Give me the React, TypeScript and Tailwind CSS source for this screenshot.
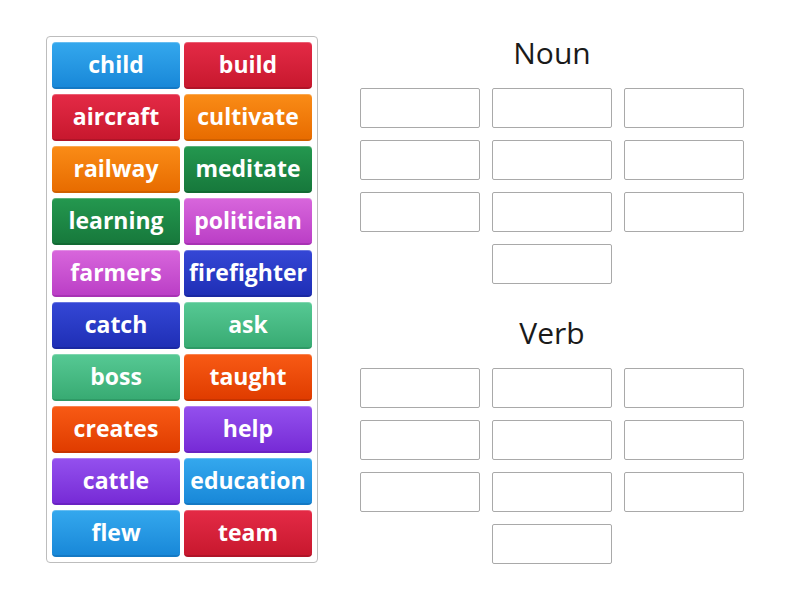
const tiles: { word: string; cls: string }[] = [
  { word: "child", cls: "from-[#34a8ee] to-[#1888d8] border-[#1479c4]" },
  { word: "build", cls: "from-[#e42a46] to-[#c8182e] border-[#b01428]" },
  { word: "aircraft", cls: "from-[#e42a46] to-[#c8182e] border-[#b01428]" },
  { word: "cultivate", cls: "from-[#fa8c16] to-[#e86c00] border-[#d06000]" },
  { word: "railway", cls: "from-[#fa8c16] to-[#e86c00] border-[#d06000]" },
  { word: "meditate", cls: "from-[#24984f] to-[#17793c] border-[#126a33]" },
  { word: "learning", cls: "from-[#24984f] to-[#17793c] border-[#126a33]" },
  { word: "politician", cls: "from-[#d866dc] to-[#bb3ec6] border-[#a832b4]" },
  { word: "farmers", cls: "from-[#d866dc] to-[#bb3ec6] border-[#a832b4]" },
  { word: "firefighter", cls: "from-[#3547d6] to-[#1f2fb6] border-[#1a28a2]" },
  { word: "catch", cls: "from-[#3547d6] to-[#1f2fb6] border-[#1a28a2]" },
  { word: "ask", cls: "from-[#56c994] to-[#38ab73] border-[#2f9a66]" },
  { word: "boss", cls: "from-[#56c994] to-[#38ab73] border-[#2f9a66]" },
  { word: "taught", cls: "from-[#f85a14] to-[#e03c00] border-[#c83400]" },
  { word: "creates", cls: "from-[#f85a14] to-[#e03c00] border-[#c83400]" },
  { word: "help", cls: "from-[#9450ee] to-[#772ad6] border-[#6a22c2]" },
  { word: "cattle", cls: "from-[#9450ee] to-[#772ad6] border-[#6a22c2]" },
  { word: "education", cls: "from-[#34a8ee] to-[#1888d8] border-[#1479c4]" },
  { word: "flew", cls: "from-[#34a8ee] to-[#1888d8] border-[#1479c4]" },
  { word: "team", cls: "from-[#e42a46] to-[#c8182e] border-[#b01428]" },
];

function DropGrid() {
  return (
    <div className="grid grid-cols-[120px_120px_120px] gap-[12px]">
      {Array.from({ length: 9 }).map((_, i) => (
        <div key={i} className="h-[40px] border border-[#a9a9a9] rounded-[2px] bg-white" />
      ))}
      <div className="col-start-2 h-[40px] border border-[#a9a9a9] rounded-[2px] bg-white" />
    </div>
  );
}

export default function App() {
  return (
    <div
      className="w-[800px] h-[600px] bg-white flex items-start pl-[46px]"
      style={{ fontFamily: '"Open Sans", sans-serif' }}
    >
      <div className="mt-[36px] w-[272px] h-[527px] border border-[#bdbdbd] rounded-[4px] p-[5px] grid grid-cols-[128px_128px] gap-x-[4px] gap-y-[5px] auto-rows-[47px]">
        {tiles.map((t) => (
          <div
            key={t.word}
            className={`bg-gradient-to-b ${t.cls} border-b-2 rounded-[4px] shadow-[inset_0_1px_0_rgba(255,255,255,0.25)] flex items-center justify-center text-white font-bold text-[23px] leading-none pb-[1px]`}
          >
            {t.word}
          </div>
        ))}
      </div>
      <div className="ml-[42px] mt-[33px] flex flex-col items-center">
        <div className="h-[40px] leading-[40px] text-[30px] text-[#1a1a1a] mb-[15px]">Noun</div>
        <DropGrid />
        <div className="mt-[29px] h-[40px] leading-[40px] text-[30px] text-[#1a1a1a] mb-[15px]">Verb</div>
        <DropGrid />
      </div>
    </div>
  );
}
